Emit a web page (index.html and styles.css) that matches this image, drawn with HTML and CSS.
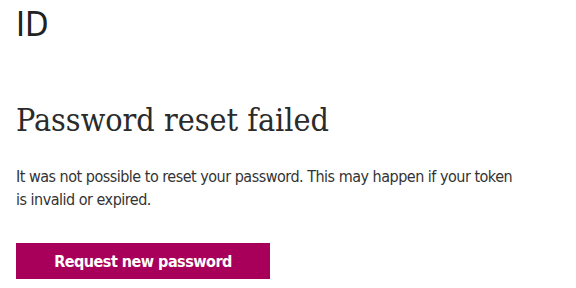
FILE: index.html
```html
<!DOCTYPE html>
<html lang="en">
<head>
<meta charset="utf-8">
<title>Password reset failed</title>
<link rel="stylesheet" href="styles.css">
</head>
<body>
<header class="site-header">
  <div class="logo">ID</div>
</header>
<main class="content">
  <h1 class="title">Password reset failed</h1>
  <p class="message">It was not possible to reset your password. This may happen if your token is invalid or expired.</p>
  <a class="button" href="#">Request new password</a>
</main>
</body>
</html>
```
FILE: styles.css
```css
html, body {
  margin: 0;
  padding: 0;
  background: #ffffff;
}
body {
  font-family: "DejaVu Sans Condensed", sans-serif;
  color: #333333;
  padding: 0 16px;
}
.site-header {
  height: 80px;
}
.logo {
  font-family: "DejaVu Sans Condensed", sans-serif;
  font-size: 34px;
  line-height: 48px;
  color: #222222;
}
.title {
  font-family: "DejaVu Serif Condensed", "DejaVu Serif", serif;
  font-weight: normal;
  font-size: 32px;
  line-height: 40px;
  margin: 20px 0 25px;
  color: #2b2b2b;
}
.message {
  font-size: 16px;
  letter-spacing: -0.5px;
  line-height: 23px;
  max-width: 510px;
  margin: 0 0 32px;
  color: #333333;
}
.button {
  display: flex;
  align-items: center;
  justify-content: center;
  width: 254px;
  height: 36px;
  background: #a8005a;
  color: #ffffff;
  font-weight: bold;
  font-size: 16px;
  letter-spacing: -0.5px;
  text-decoration: none;
}
```
